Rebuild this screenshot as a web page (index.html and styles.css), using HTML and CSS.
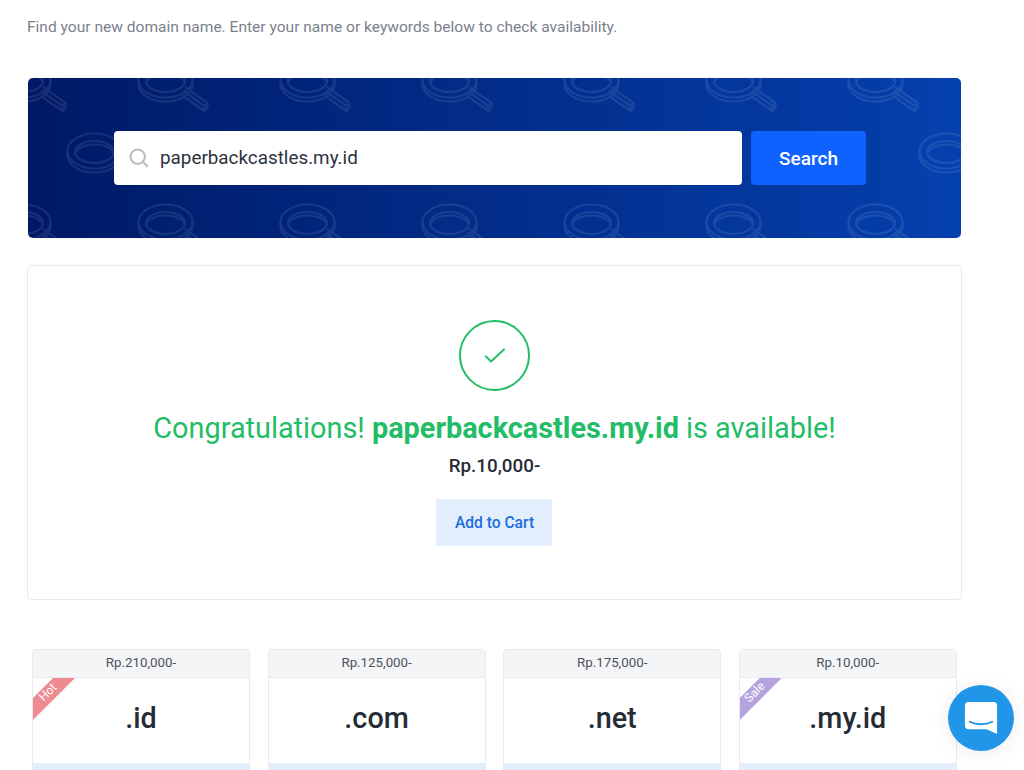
FILE: index.html
```html
<!DOCTYPE html>
<html lang="en">
<head>
<meta charset="utf-8">
<title>Domain search</title>
<link rel="stylesheet" href="styles.css">
</head>
<body>
<main class="page">
  <p class="intro">Find your new domain name. Enter your name or keywords below to check availability.</p>
  <section class="banner">
    <svg class="pattern" width="100%" height="100%" aria-hidden="true">
      <defs>
        <g id="glass" fill="none" stroke="#fff" stroke-width="2.200" stroke-linejoin="round">
          <ellipse cx="0" cy="-2" rx="27" ry="17.500"/>
          <ellipse cx="0" cy="-1" rx="19.500" ry="11"/>
          <path d="M-19.500 2a19.500 10.500 0 0 1 39 0"/>
          <path d="M-27 -2v4a27 17.500 0 0 0 54 0v-4"/>
          <path d="M19.500 5L42 21v5l-3 3L17.500 14"/>
          <path d="M18 9l21 15 3-3M39 24v5"/>
        </g>
        <pattern id="tile" width="142" height="142" patternUnits="userSpaceOnUse">
          <use href="#glass" x="137.500" y="4"/>
          <use href="#glass" x="-4.500" y="4"/>
          <use href="#glass" x="137.500" y="146"/>
          <use href="#glass" x="-4.500" y="146"/>
          <use href="#glass" x="66.500" y="75"/>
        </pattern>
      </defs>
      <rect width="100%" height="100%" fill="url(#tile)"/>
    </svg>
    <form class="search">
      <div class="field">
        <svg class="lens" width="20" height="20" viewBox="0 0 20 20" fill="none" stroke="#b9bcc2" stroke-width="2" stroke-linecap="round"><circle cx="8.700" cy="8.700" r="7.200"/><path d="M14 14l4.300 4.300"/></svg>
        <span class="query">paperbackcastles.my.id</span>
      </div>
      <button class="go" type="button">Search</button>
    </form>
  </section>
  <section class="result">
    <div class="ok">
      <svg width="22" height="18" viewBox="0 0 22 18" fill="none" stroke="#22bd66" stroke-width="2" stroke-linecap="round" stroke-linejoin="round"><path d="M2 9.500l5 5L20 2.500"/></svg>
    </div>
    <h2 class="title">Congratulations! <strong>paperbackcastles.my.id</strong> is available!</h2>
    <p class="price">Rp.10,000-</p>
    <button class="cart" type="button">Add to Cart</button>
  </section>
  <section class="tlds">
    <article class="tld">
      <div class="tld-price">Rp.210,000-</div>
      <div class="tld-body"><span class="ribbon hot"><span>Hot</span></span>.id</div>
      <div class="tld-foot"></div>
    </article>
    <article class="tld">
      <div class="tld-price">Rp.125,000-</div>
      <div class="tld-body">.com</div>
      <div class="tld-foot"></div>
    </article>
    <article class="tld">
      <div class="tld-price">Rp.175,000-</div>
      <div class="tld-body">.net</div>
      <div class="tld-foot"></div>
    </article>
    <article class="tld">
      <div class="tld-price">Rp.10,000-</div>
      <div class="tld-body"><span class="ribbon sale"><span>Sale</span></span>.my.id</div>
      <div class="tld-foot"></div>
    </article>
  </section>
</main>
<button class="chat" type="button" aria-label="Chat">
  <svg width="34" height="34" viewBox="0 0 36 36"><path d="M5 1h26a4 4 0 0 1 4 4v30l-11-5H5a4 4 0 0 1-4-4V5a4 4 0 0 1 4-4z" fill="#fff"/><path d="M6 22c7 3.500 17 3.500 24 0" fill="none" stroke="#2196e8" stroke-width="2" stroke-linecap="round"/></svg>
</button>
</body>
</html>
```
FILE: styles.css
```css
* { box-sizing: border-box; }
html, body { margin: 0; height: 770px; overflow: hidden; }
body { background: #fff; font-family: Roboto, "Liberation Sans", sans-serif; color: #262c36; }
.page { width: 962px; padding: 19px 0 0 27px; }
.intro { margin: 0 0 42px; font-size: 15.550px; line-height: 17px; color: #7b818c; }

.banner { position: relative; margin-left: 1px; width: 933px; height: 160px; border-radius: 5px; overflow: hidden;
  background: linear-gradient(90deg, #001a66 0%, #0641ae 100%); padding: 53px 0 0 86px; box-shadow: 0 0 1px rgba(0,0,0,.3); }
.pattern { position: absolute; inset: 0; opacity: .09; }
.search { position: relative; display: flex; gap: 9px; }
.field { width: 628px; height: 54px; background: #fff; border-radius: 4px; display: flex; align-items: center; padding-left: 15px; gap: 11px; }
.query { font-size: 18.850px; color: #2d333f; }
.go { width: 115px; height: 54px; border: 0; border-radius: 4px; background: #0f62fe; color: #fff; font: 500 19px Roboto, sans-serif; padding-bottom: 1px; }

.result { margin-top: 27px; width: 935px; height: 335px; border: 1px solid #e8eaee; border-radius: 4px; display: flex; flex-direction: column; align-items: center; padding-top: 54px; }
.ok { width: 71px; height: 71px; border: 2px solid #22bd66; border-radius: 50%; display: flex; align-items: center; justify-content: center; }
.title { margin: 20px 0 0; font-size: 28.850px; font-weight: 400; line-height: 34px; color: #22bd66; }
.title strong { font-weight: 700; }
.price { margin: 10px 0 0; font-size: 18.800px; font-weight: 500; line-height: 22px; }
.cart { margin: 22px 2px 0 0; width: 116px; height: 47px; border: 0; padding: 0 0 0 2px; background: #e3eefc; color: #1b6fdc; font: 500 15.600px Roboto, sans-serif; border-radius: 2px; }

.tlds { display: grid; grid-template-columns: repeat(4, 218px); gap: 17.600px; margin: 49px 0 0 5px; }
.tld { height: 140px; border: 1px solid #e8eaee; border-radius: 4px; overflow: hidden; }
.tld-price { height: 28px; background: #f4f5f7; border-bottom: 1px solid #e8eaee; font-size: 13.300px; line-height: 26px; text-align: center; color: #4c525c; }
.tld-body { position: relative; height: 85px; font-size: 28.800px; font-weight: 500; text-align: center; line-height: 80px; }
.ribbon { position: absolute; left: 0; top: 0; width: 42px; height: 42px; clip-path: polygon(0 42px, 42px 0, 20px 0, 0 20px); }
.ribbon span { position: absolute; left: -1px; top: 8px; width: 32px; transform: rotate(-45deg); font-size: 12px; font-weight: 400; line-height: 13px; color: #fff; text-align: center; }
.hot { background: #ee8a92; }
.sale { background: #b5a3e0; }
.tld-foot { height: 30px; background: #e3eefc; }

.chat { position: fixed; left: 948px; top: 685px; width: 66px; height: 66px; padding: 0; border: 0; border-radius: 50%; background: #2196e8; display: flex; align-items: center; justify-content: center; box-shadow: 0 2px 20px rgba(0,0,0,.08); }
```
